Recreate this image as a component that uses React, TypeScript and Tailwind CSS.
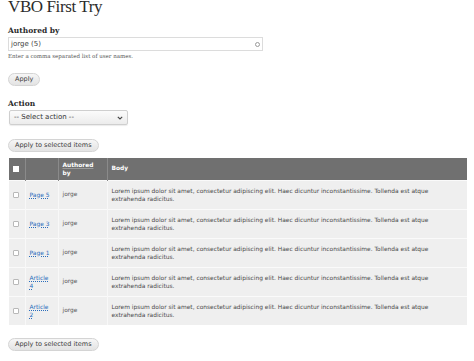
import React from "react";

const ROWS = [
  { title: ["Page 5"], author: "jorge" },
  { title: ["Page 3"], author: "jorge" },
  { title: ["Page 1"], author: "jorge" },
  { title: ["Article", "4"], author: "jorge" },
  { title: ["Article", "2"], author: "jorge" },
];

const BODY =
  "Lorem ipsum dolor sit amet, consectetur adipiscing elit. Haec dicuntur inconstantissime. Tollenda est atque extrahenda radicitus.";

const serif = "font-['Liberation_Serif',serif]";
const labelSerif = "font-['DejaVu_Serif','Liberation_Serif',serif]";
const sans = "font-['DejaVu_Sans','Liberation_Sans',sans-serif]";

function PillButton({ children }: { children: React.ReactNode }) {
  return (
    <button
      type="button"
      className={`${sans} h-[13px] rounded-full border border-[#d4d4d4] bg-gradient-to-b from-[#f6f6f6] to-[#e3e3e3] px-[6px] text-[6.5px] leading-none text-[#3b3b3b]`}
    >
      {children}
    </button>
  );
}

function Check() {
  return <span className="block h-[6px] w-[6px] rounded-[1px] border border-[#b8b8b8] bg-white" />;
}

export default function App() {
  return (
    <div className="flex h-[361px] w-[474px] flex-col items-start overflow-hidden bg-white pl-[8px] leading-none opacity-[0.999]">
      <h1 className={`${serif} -mt-[2px] h-[18px] text-[17px] leading-[18px] tracking-[-0.4px] text-[#2b2b2b]`}>VBO First Try</h1>

      {/* Authored by filter */}
      <div className="mt-[10px] flex flex-col items-start">
        <label className={`${labelSerif} block text-[7.5px] font-bold leading-[10px] text-[#2b2b2b]`}>Authored by</label>
        <div className="mt-[1px] flex h-[14px] w-[255px] items-center justify-between border border-[#dcdcdc] bg-white pl-[2px] pr-[2px]">
          <span className={`${sans} text-[7px] text-[#444]`}>jorge (5)</span>
          <span className="block h-[5px] w-[5px] rounded-full border border-[#9a9a9a]" />
        </div>
        <p className={`${labelSerif} mt-[2px] text-[5.5px] leading-[7px] text-[#555]`}>
          Enter a comma separated list of user names.
        </p>
      </div>

      <div className="mt-[13px] flex">
        <PillButton>Apply</PillButton>
      </div>

      {/* Action */}
      <div className="mt-[13px] flex flex-col items-start">
        <label className={`${labelSerif} block text-[7.5px] font-bold leading-[10px] text-[#2b2b2b]`}>Action</label>
        <div className="mt-[1px] ml-[1px] flex h-[15px] w-[119px] items-center justify-between rounded-[2px] border border-[#cfcfcf] bg-gradient-to-b from-[#fbfbfb] to-[#ececec] px-[4px] shadow-[0_1px_1px_rgba(0,0,0,0.08)]">
          <span className={`${sans} text-[7px] text-[#333]`}>-- Select action --</span>
          <svg width="6" height="4" viewBox="0 0 6 4">
            <path d="M0.8 0.8 L3 3 L5.2 0.8" fill="none" stroke="#444" strokeWidth="1.1" />
          </svg>
        </div>
      </div>

      <div className="mt-[14px] flex">
        <PillButton>Apply to selected items</PillButton>
      </div>

      {/* Table */}
      <table className={`${sans} mt-[6px] ml-[1px] w-[458px] border-collapse text-[5.9px]`}>
        <thead>
          <tr className="h-[22px] bg-[#707070] text-left text-white">
            <th className="w-[16px] border-r border-[#8a8a8a] pl-[4px]">
              <span className="block h-[6px] w-[6px] bg-white" />
            </th>
            <th className="w-[33px] border-r border-[#8a8a8a]" />
            <th className="w-[49px] border-r border-[#8a8a8a] pl-[4px] font-bold leading-[8px]">
              <span className="underline decoration-[#9a9a9a]">Authored</span>
              <br />
              by
            </th>
            <th className="pl-[4px] font-bold">Body</th>
          </tr>
        </thead>
        <tbody>
          {ROWS.map((r, i) => (
            <tr key={i} className="h-[29px] border-t border-[#fafafa] bg-[#efefef] align-middle">
              <td className="border-r border-[#f8f8f8] pl-[4px]">
                <Check />
              </td>
              <td className="border-r border-[#f8f8f8] pl-[4px] leading-[8px]">
                <span className="text-[#2a6dbc] underline decoration-dotted decoration-[#2a6dbc]">
                  {r.title[0]}
                  {r.title[1] && (
                    <>
                      <br />
                      {r.title[1]}
                    </>
                  )}
                </span>
              </td>
              <td className="border-r border-[#f8f8f8] pl-[4px] text-[#555]">{r.author}</td>
              <td className="pl-[4px] pr-[30px] leading-[8px] text-[#494949]">{BODY}</td>
            </tr>
          ))}
        </tbody>
      </table>

      <div className="mt-[13px] flex">
        <PillButton>Apply to selected items</PillButton>
      </div>
    </div>
  );
}
